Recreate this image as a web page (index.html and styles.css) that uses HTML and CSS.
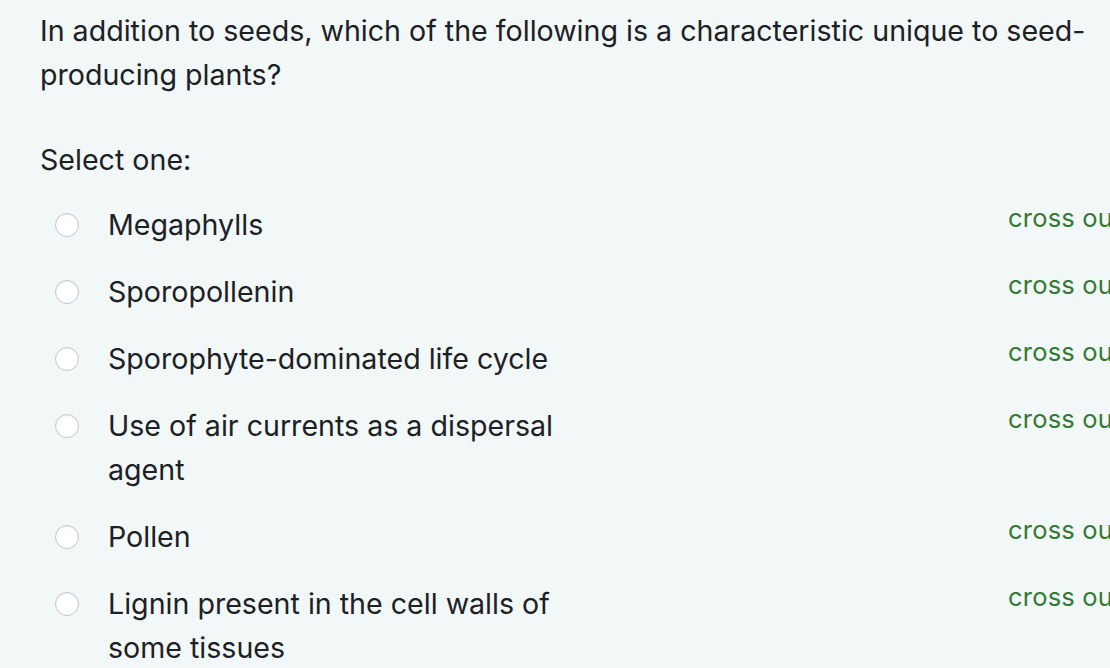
FILE: index.html
```html
<!DOCTYPE html>
<html lang="en">
<head>
    <meta charset="UTF-8">
    <title>Question</title>
    <link rel="stylesheet" href="styles.css">
</head>
<body>
<div class="question">
    <div class="qtext">In addition to seeds, which of the following is a characteristic unique to seed-producing plants?</div>
    <div class="prompt">Select one:</div>
    <div class="answer">
        <div class="option">
            <span class="radio"></span>
            <label class="option-label">Megaphylls</label>
            <a class="crossout" href="#">cross out</a>
        </div>
        <div class="option">
            <span class="radio"></span>
            <label class="option-label">Sporopollenin</label>
            <a class="crossout" href="#">cross out</a>
        </div>
        <div class="option">
            <span class="radio"></span>
            <label class="option-label">Sporophyte-dominated life cycle</label>
            <a class="crossout" href="#">cross out</a>
        </div>
        <div class="option">
            <span class="radio"></span>
            <label class="option-label">Use of air currents as a dispersal agent</label>
            <a class="crossout" href="#">cross out</a>
        </div>
        <div class="option">
            <span class="radio"></span>
            <label class="option-label">Pollen</label>
            <a class="crossout" href="#">cross out</a>
        </div>
        <div class="option">
            <span class="radio"></span>
            <label class="option-label">Lignin present in the cell walls of some tissues</label>
            <a class="crossout" href="#">cross out</a>
        </div>
    </div>
</div>
</body>
</html>
```

FILE: styles.css
```css
body {
    margin: 0;
    padding: 0;
    background-color: #f2f7f7;
    font-family: Inter, 'Liberation Sans', sans-serif;
    color: #1d2125;
    overflow: hidden;
}
.question {
    padding: 9px 0 0 40px;
    font-size: 28.6px;
    line-height: 44px;
}
.qtext {
    width: 1060px;
}
.prompt {
    margin-top: 41px;
}
.answer {
    margin-top: 21px;
    display: flex;
    flex-direction: column;
    gap: 23px;
}
.option {
    display: flex;
    align-items: flex-start;
    padding-left: 15px;
}
.radio {
    flex: 0 0 auto;
    width: 22px;
    height: 22px;
    margin-top: 10px;
    border: 1px solid #c4c8c8;
    border-radius: 50%;
    background-color: #fff;
    box-shadow: inset 0 1px 2px rgba(0, 0, 0, 0.08);
}
.option-label {
    flex: 0 0 auto;
    width: 480px;
    margin-left: 29px;
}
.crossout {
    flex: 0 0 auto;
    margin-left: 420px;
    font-size: 25.5px;
    line-height: 30px;
    letter-spacing: 0.2px;
    color: #357a32;
    text-decoration: none;
    white-space: nowrap;
}
```
